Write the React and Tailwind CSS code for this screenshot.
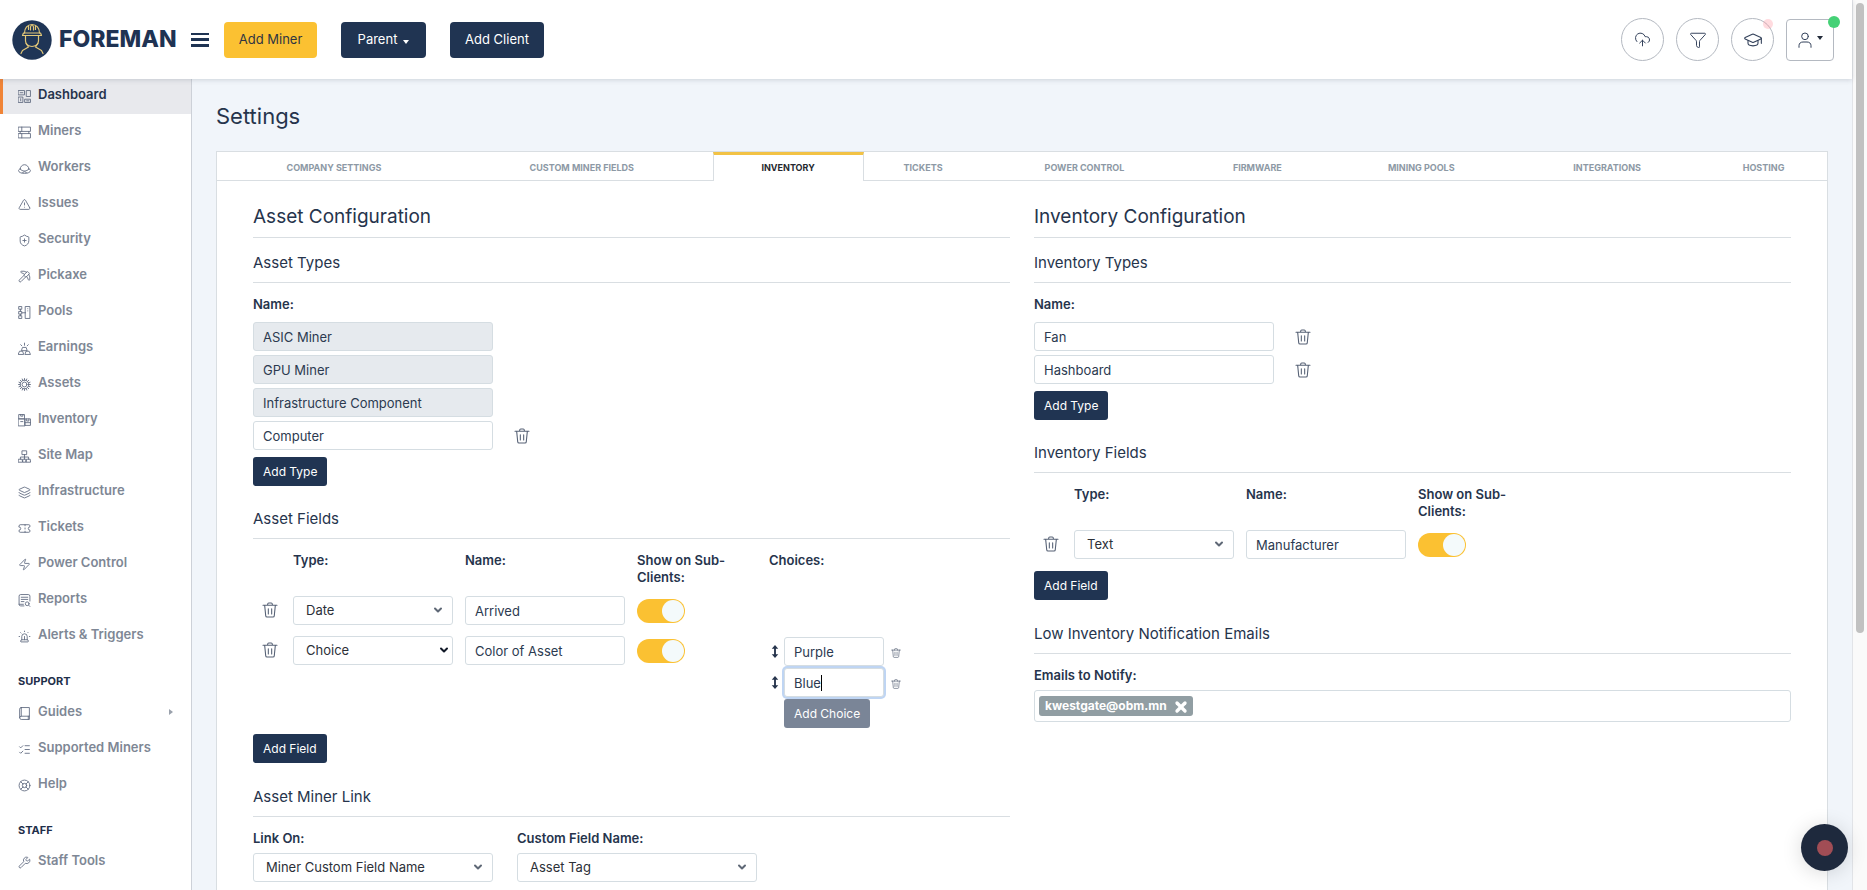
import {
  ChevronDown,
  CloudUpload,
  Funnel,
  GraduationCap,
  Layers,
  LifeBuoy,
  ListChecks,
  Pickaxe,
  ShieldPlus,
  Siren,
  Ticket,
  TriangleAlert,
  Wrench,
  X,
  Zap,
} from 'lucide-react'

function Glyph({ children, className = 'h-[13px] w-[13px]', strokeWidth = 1.6, viewBox = '0 0 24 24' }) {
  return (
    <svg
      viewBox={viewBox}
      className={className}
      fill="none"
      stroke="currentColor"
      strokeWidth={strokeWidth}
      strokeLinecap="round"
      strokeLinejoin="round"
      aria-hidden
    >
      {children}
    </svg>
  )
}

const DashboardIcon = () => (
  <Glyph>
    <path d="M1 1h11v8H1zM1 13h8v10H1zM16 1h7v11h-7zM13 17h10v6H13zM4 5h5M5 16v4M16 20h4" />
  </Glyph>
)

const MinersIcon = () => (
  <Glyph>
    <path d="M1 2h22v8H1zM1 14h22v8H1zM7 2v8M7 14v8M4 10v4M20 10v4" />
  </Glyph>
)

const WorkersIcon = () => (
  <Glyph>
    <path d="M4 13a8 8 0 0 1 16 0M4 12.500c-2 1-3 2-3 3.500 0 3 5 5 11 5s11-2 11-5c0-1.500-1-2.500-3-3.500M4 13c2 2.500 5 3.500 8 3.500s6-1 8-3.500M8 20c1-3 7-3 8 0" />
  </Glyph>
)

const PoolsIcon = () => (
  <Glyph>
    <path d="M14 1h8v22h-8zM18 5v.1M18 9v.1M2 1h5v5H2zM2 10h5v5H2zM2 18h5v5H2zM7 12.500h7M4.500 6v4M4.500 15v3" />
  </Glyph>
)

const EarningsIcon = () => (
  <Glyph>
    <path d="M9 10h6l2 6H7zM3.500 17h5l2 6H1zM15.500 17h5l2.500 6h-9.500zM12 2v4M5 5l2 2M19 5l-2 2" />
  </Glyph>
)

const AssetsIcon = () => (
  <Glyph>
    <circle cx="12" cy="12" r="8" />
    <circle cx="12" cy="12" r="4.500" />
    <path d="M12 1v3M12 20v3M1 12h3M20 12h3M4.200 4.200l2 2M17.800 17.800l2 2M19.800 4.200l-2 2M6.200 17.800l-2 2M7.800 1.800l1 2.700M16.200 1.800l-1 2.700M7.800 22.200l1-2.700M16.200 22.200l-1-2.700M1.800 7.800l2.700 1M1.800 16.200l2.700-1M22.200 7.800l-2.700 1M22.200 16.200l-2.700-1" />
  </Glyph>
)

const InventoryIcon = () => (
  <Glyph>
    <path d="M2 1h10v8H2zM1 9h12v13H1zM13 9h10v12H13zM5 1v3h4V1M5 14h4M16 9v4h4V9M13 16h10" />
  </Glyph>
)

const SiteMapIcon = () => (
  <Glyph>
    <path d="M8 1.500h8v7H8zM1.500 17h6l1 5.500H.8zM16.500 17h6l.7 5.500h-7.700zM12 8.500V17M4.500 17v-4h15v4M9.500 17h5v5.500h-5z" />
  </Glyph>
)

const ReportsIcon = () => (
  <Glyph>
    <path d="M11 22H5a3 3 0 0 1-3-3V4a3 3 0 0 1 3-3h14a3 3 0 0 1 3 3v9M6 6h12M6 10h12M6 14h5M2 19h8" />
    <circle cx="17" cy="18" r="3.500" />
    <path d="m20 21 2 2" />
  </Glyph>
)

const GuidesIcon = () => (
  <Glyph>
    <path d="M6 1h15v16H6a3 3 0 0 0-3 3V4a3 3 0 0 1 3-3zM3 20a3 3 0 0 0 3 3h15v-6M6 1v16M19 17v6" />
  </Glyph>
)

const TrashIcon = ({ className = 'h-4 w-4' }) => (
  <Glyph className={className} strokeWidth={1.6}>
    <path d="M1.500 5h21M8.500 5V3.200C8.500 2.200 9.200 1.500 10.200 1.500h3.600c1 0 1.700.7 1.700 1.700V5M4 5l1.600 15.800c.1 1 .9 1.700 1.900 1.700h9c1 0 1.800-.7 1.900-1.700L20 5M9.500 10v8M14.500 10v8" />
  </Glyph>
)

const UserIcon = () => (
  <Glyph className="h-4 w-4" strokeWidth={1.5}>
    <circle cx="12" cy="6.500" r="5" />
    <path d="M3 23v-2.500c0-3.500 2.500-5.500 6-5.500h6c3.500 0 6 2 6 5.500V23" />
  </Glyph>
)

const DragIcon = () => (
  <svg viewBox="0 0 8 14" className="mr-1 ml-[2px] h-[13px] w-[8px] text-[#26344c]" fill="currentColor" aria-hidden>
    <path d="M4 0l3.500 4H5v6h2.500L4 14 .5 10H3V4H.5z" />
  </svg>
)

function Logo() {
  return (
    <a href="#" className="flex items-center gap-[7px]" aria-label="Foreman">
      <svg viewBox="0 0 40 40" className="h-10 w-10" fill="none" aria-hidden>
        <circle cx="20" cy="20" r="19.700" fill="#1f3556" />
        <g stroke="#e3c878" strokeWidth="1.200" strokeLinecap="round" strokeLinejoin="round">
          <path d="M12.500 13C12.500 8 15.500 4.500 20 4.500s7.500 3.500 7.500 8.500" />
          <path d="M16.500 9.500V6M23.500 9.500V6M18.500 10V7a1.500 1.500 0 0 1 3 0v3" />
          <path d="M11.500 13h17l1 2.500h-19z" />
          <path d="M13.500 16v5c0 3 3 5.500 6.500 5.500s6.500-2.500 6.500-5.500v-5" />
          <path d="M14 23.500l2.500 3.500-6 3.500-1.500 3M26 23.500L23.500 27l6 3.500 1.500 3" />
        </g>
      </svg>
      <span className="text-[23px] leading-none font-extrabold text-[#1f3353]">FOREMAN</span>
    </a>
  )
}

function RoundButton({ label, children }) {
  return (
    <button
      type="button"
      aria-label={label}
      className="relative flex h-[43px] w-[43px] items-center justify-center rounded-full border border-[#b4b9c1] bg-white text-[#33415a]"
    >
      {children}
    </button>
  )
}

function Header() {
  return (
    <header className="relative z-10 flex h-[79px] shrink-0 items-center bg-white pr-[18px] pl-3 shadow-[0_1px_5px_rgba(60,70,90,0.2)]">
      <div className="flex w-[212px] items-center">
        <Logo />
        <button type="button" aria-label="Toggle menu" className="mr-[15px] ml-auto flex w-[18px] flex-col gap-[3px]">
          <span className="h-[2px] bg-[#1f3353]" />
          <span className="h-[3px] bg-[#1f3353]" />
          <span className="h-[3px] bg-[#1f3353]" />
        </button>
      </div>
      <div className="flex gap-6 text-[13px]">
        <button type="button" className="h-9 w-[93px] rounded bg-[#fbc132] text-[#2f3542]">
          Add Miner
        </button>
        <button
          type="button"
          className="flex h-9 w-[85px] items-center justify-center gap-[6px] rounded bg-[#203452] text-white"
        >
          Parent
          <span className="mt-1 border-x-[3px] border-t-4 border-x-transparent border-t-white" />
        </button>
        <button type="button" className="h-9 w-[94px] rounded bg-[#203452] text-white">
          Add Client
        </button>
      </div>

      <div className="ml-auto flex items-center gap-3">
        <RoundButton label="Upload">
          <CloudUpload className="h-[17px] w-[17px]" strokeWidth={1.4} />
        </RoundButton>
        <RoundButton label="Filter">
          <Funnel className="h-[18px] w-[18px]" strokeWidth={1.3} />
        </RoundButton>
        <RoundButton label="Learning">
          <GraduationCap className="h-5 w-5" strokeWidth={1.3} />
          <span className="absolute top-0 right-0 h-[10px] w-[10px] rounded-full bg-[#ff8896]/30" />
        </RoundButton>
        <button
          type="button"
          aria-label="Account"
          className="relative flex h-[42px] w-12 items-center justify-center gap-1 rounded border border-[#b4b9c1] text-[#33415a]"
        >
          <UserIcon />
          <span className="-mt-1 border-x-[3px] border-t-4 border-x-transparent border-t-[#222b3a]" />
          <span className="absolute -top-1 -right-[7px] h-3 w-3 rounded-full bg-[#45d176]" />
        </button>
      </div>
    </header>
  )
}

const MENU = [
  { label: 'Dashboard', icon: DashboardIcon, active: true },
  { label: 'Miners', icon: MinersIcon },
  { label: 'Workers', icon: WorkersIcon },
  { label: 'Issues', icon: TriangleAlert },
  { label: 'Security', icon: ShieldPlus },
  { label: 'Pickaxe', icon: Pickaxe },
  { label: 'Pools', icon: PoolsIcon },
  { label: 'Earnings', icon: EarningsIcon },
  { label: 'Assets', icon: AssetsIcon },
  { label: 'Inventory', icon: InventoryIcon },
  { label: 'Site Map', icon: SiteMapIcon },
  { label: 'Infrastructure', icon: Layers },
  { label: 'Tickets', icon: Ticket },
  { label: 'Power Control', icon: Zap },
  { label: 'Reports', icon: ReportsIcon },
  { label: 'Alerts & Triggers', icon: Siren },
]

const SUPPORT = [
  { label: 'Guides', icon: GuidesIcon, submenu: true },
  { label: 'Supported Miners', icon: ListChecks },
  { label: 'Help', icon: LifeBuoy },
]

const STAFF = [{ label: 'Staff Tools', icon: Wrench }]

function MenuList({ items }) {
  return (
    <ul>
      {items.map(({ label, icon: Icon, active, submenu }) => (
        <li key={label} className="h-9">
          <a
            href="#"
            className={`flex h-[35px] items-center border-l-[3px] pb-[3px] pl-[15px] text-[13px] font-semibold ${
              active ? 'border-[#f08437] bg-[#e8e9ed] text-[#26344c]' : 'border-transparent text-[#7e8795]'
            }`}
          >
            <span className="mt-[2px] mr-[7px] text-[#5f6a7f]">
              <Icon className="h-[13px] w-[13px]" strokeWidth={1.6} />
            </span>
            {label}
            {submenu && (
              <span className="mr-[18px] ml-auto border-y-[3px] border-l-4 border-y-transparent border-l-[#9aa1ac]" />
            )}
          </a>
        </li>
      ))}
    </ul>
  )
}

function MenuHeading({ children }) {
  return <h2 className="flex h-[41px] items-center pt-[11px] pl-[18px] text-[11px] font-bold text-[#1f2f4a]">{children}</h2>
}

function Sidebar() {
  return (
    <nav className="w-[192px] shrink-0 overflow-hidden border-r border-[#cdd1d8] bg-white">
      <MenuList items={MENU} />
      <MenuHeading>SUPPORT</MenuHeading>
      <MenuList items={SUPPORT} />
      <MenuHeading>STAFF</MenuHeading>
      <MenuList items={STAFF} />
    </nav>
  )
}

const TABS = [
  'COMPANY SETTINGS',
  'CUSTOM MINER FIELDS',
  'INVENTORY',
  'TICKETS',
  'POWER CONTROL',
  'FIRMWARE',
  'MINING POOLS',
  'INTEGRATIONS',
  'HOSTING',
]

function Tabs() {
  return (
    <div
      role="tablist"
      className="grid h-[29px] grid-cols-[234fr_262fr_151fr_119fr_204fr_142fr_186fr_186fr_127fr] text-[9px] font-bold"
    >
      {TABS.map((tab) => (
        <button
          key={tab}
          type="button"
          role="tab"
          aria-selected={tab === 'INVENTORY'}
          className={
            tab === 'INVENTORY'
              ? 'border-x border-t-[3px] border-x-[#d9dee2] border-t-[#f2c245] text-[#25282e]'
              : 'border-b border-[#d9dee2] pt-[3px] text-[#8d99a5]'
          }
        >
          {tab}
        </button>
      ))}
    </div>
  )
}

function Title({ children }) {
  return (
    <h2 className="mb-[15px] border-b border-[#d9dee2] pb-2 text-[19px] leading-6 text-[#26344c]">{children}</h2>
  )
}

function Subtitle({ children }) {
  return (
    <h3 className="mb-[13px] border-b border-[#d9dee2] pb-[9px] text-[15px] leading-5 text-[#26344c]">{children}</h3>
  )
}

function DarkButton({ children, className = '' }) {
  return (
    <button type="button" className={`h-[29px] rounded-[3px] bg-[#203452] px-[10px] text-xs text-white ${className}`}>
      {children}
    </button>
  )
}

function TextBox({ label, value, disabled, className = 'w-60' }) {
  return (
    <input
      type="text"
      aria-label={label}
      defaultValue={value}
      disabled={disabled}
      className={`block h-[29px] rounded-[3px] border border-[#d5dde2] bg-white px-[9px] text-[13px] text-[#2c3a50] disabled:bg-[#e6eaee] ${className}`}
    />
  )
}

function SelectBox({ id, label, value, className = 'w-60', arrow = 'right-[9px] stroke-[#5f6876]' }) {
  return (
    <div className={`relative ${className}`}>
      <select
        id={id}
        aria-label={label}
        defaultValue={value}
        className="block h-[29px] w-full appearance-none rounded-[3px] border border-[#d5dde2] bg-white px-3 text-[13px] font-normal text-[#2c3038]"
      >
        <option>{value}</option>
      </select>
      <ChevronDown className={`pointer-events-none absolute top-2 h-3 w-3 ${arrow}`} strokeWidth={4} aria-hidden />
    </div>
  )
}

function Toggle({ label }) {
  return (
    <label className="relative block h-6 w-12 rounded-full bg-[#fbc132]">
      <input type="checkbox" role="switch" defaultChecked aria-label={label} className="peer sr-only" />
      <span className="absolute top-px left-px h-[22px] w-[22px] rounded-full bg-[#f4fafb] peer-checked:left-[25px]" />
    </label>
  )
}

function DeleteButton({ label, className = '', small }) {
  return (
    <button type="button" aria-label={label} className={`text-[#566175] ${className}`}>
      <TrashIcon className={small ? 'h-[10px] w-[10px]' : 'h-4 w-4'} />
    </button>
  )
}

function TypeList({ types }) {
  return (
    <div className="mb-[23px]">
      <p className="mb-[9px] text-[13px] leading-[17px] font-semibold text-[#26344c]">Name:</p>
      <ul className="mb-[7px] flex flex-col gap-1">
        {types.map((type) => (
          <li key={type.name} className="flex items-center">
            <TextBox label="Name" value={type.name} disabled={type.locked} />
            {!type.locked && <DeleteButton label={`Delete ${type.name}`} className="ml-[21px]" />}
          </li>
        ))}
      </ul>
      <DarkButton>Add Type</DarkButton>
    </div>
  )
}

const FIELD_GRID = 'grid grid-cols-[28px_160px_160px_120px_1fr] gap-x-3'

function FieldHeadings({ choices }) {
  return (
    <div className={`${FIELD_GRID} mb-[10px] text-[13px] leading-[17px] font-semibold text-[#26344c]`}>
      <span />
      <span>Type:</span>
      <span>Name:</span>
      <span className="w-[90px]">Show on Sub-Clients:</span>
      {choices && <span>Choices:</span>}
    </div>
  )
}

function FieldRow({ type, name, children, arrow }) {
  return (
    <div className={`${FIELD_GRID} items-start`}>
      <DeleteButton label={`Delete ${name}`} className="mt-[6px] ml-[9px]" />
      <SelectBox label="Type" value={type} className="w-40" arrow={arrow} />
      <TextBox label="Name" value={name} className="w-40" />
      <div className="pt-[3px]">
        <Toggle label={`Show ${name} on Sub-Clients`} />
      </div>
      {children}
    </div>
  )
}

function Choice({ value, focused }) {
  return (
    <li className="flex items-center">
      <DragIcon />
      <div className="relative ml-px">
        <TextBox
          label="Choice"
          value={value}
          className={focused ? 'w-[100px] border-[#b3cdf0] ring-2 ring-[#bfd5f3]' : 'w-[100px]'}
        />
        {focused && <span className="absolute top-[7px] left-[37px] h-4 w-px bg-black" />}
      </div>
      <DeleteButton label={`Delete ${value}`} className="mt-[3px] ml-[7px]" small />
    </li>
  )
}

function AssetColumn() {
  return (
    <section>
      <Title>Asset Configuration</Title>
      <Subtitle>Asset Types</Subtitle>
      <TypeList
        types={[
          { name: 'ASIC Miner', locked: true },
          { name: 'GPU Miner', locked: true },
          { name: 'Infrastructure Component', locked: true },
          { name: 'Computer' },
        ]}
      />

      <Subtitle>Asset Fields</Subtitle>
      <FieldHeadings choices />
      <FieldRow type="Date" name="Arrived" />
      <div className="mt-[11px] mb-[6px]">
        <FieldRow type="Choice" name="Color of Asset" arrow="right-[3px] stroke-[#111827]">
          <div className="pt-px">
            <ul className="flex flex-col gap-[2px]">
              <Choice value="Purple" />
              <Choice value="Blue" focused />
            </ul>
            <button
              type="button"
              disabled
              className="mt-[2px] ml-[15px] h-[29px] rounded-[3px] bg-[#7a8597] px-[10px] text-xs text-white"
            >
              Add Choice
            </button>
          </div>
        </FieldRow>
      </div>
      <DarkButton className="mb-6">Add Field</DarkButton>

      <Subtitle>Asset Miner Link</Subtitle>
      <div className="flex gap-6 text-[13px] leading-[17px] font-semibold text-[#26344c]">
        <div>
          <label htmlFor="link-on" className="mb-[6px] block">
            Link On:
          </label>
          <SelectBox id="link-on" value="Miner Custom Field Name" />
        </div>
        <div>
          <label htmlFor="custom-field" className="mb-[6px] block">
            Custom Field Name:
          </label>
          <SelectBox id="custom-field" value="Asset Tag" />
        </div>
      </div>
    </section>
  )
}

function InventoryColumn() {
  return (
    <section>
      <Title>Inventory Configuration</Title>
      <Subtitle>Inventory Types</Subtitle>
      <TypeList types={[{ name: 'Fan' }, { name: 'Hashboard' }]} />

      <Subtitle>Inventory Fields</Subtitle>
      <FieldHeadings />
      <FieldRow type="Text" name="Manufacturer" />
      <DarkButton className="mt-3 mb-6">Add Field</DarkButton>

      <Subtitle>Low Inventory Notification Emails</Subtitle>
      <label htmlFor="emails" className="mb-[6px] block text-[13px] leading-[17px] font-semibold text-[#26344c]">
        Emails to Notify:
      </label>
      <div className="flex h-8 items-center rounded-[3px] border border-[#d5dde2] px-1">
        <span className="flex h-5 items-center rounded-[3px] bg-[#919ea3] px-[6px] text-xs font-bold text-white">
          kwestgate@obm.mn
          <button type="button" aria-label="Remove kwestgate@obm.mn" className="mt-[2px] -mr-[2px] ml-[6px]">
            <X className="h-4 w-4" strokeWidth={5} />
          </button>
        </span>
        <input id="emails" type="email" className="ml-2 min-w-0 flex-1 bg-transparent text-[13px] outline-none" />
      </div>
    </section>
  )
}

export default function App() {
  return (
    <div className="flex h-screen overflow-hidden bg-[#f1f5fa] font-[Inter,'Open_Sans',sans-serif]">
      <div className="flex min-w-0 flex-1 flex-col">
        <Header />
        <div className="flex min-h-0 flex-1">
          <Sidebar />
          <main className="flex min-w-0 flex-1 flex-col overflow-hidden pr-6 pl-6">
            <h1 className="pt-[23px] pb-[21px] text-[22px] leading-7 text-[#26344c]">Settings</h1>
            <div className="flex-1 border border-b-0 border-[#d9dee2] bg-white">
              <Tabs />
              <div className="grid grid-cols-2 gap-6 px-9 pt-6">
                <AssetColumn />
                <InventoryColumn />
              </div>
            </div>
          </main>
        </div>
      </div>
      <div className="w-[15px] shrink-0 border-l border-[#e2e4e8] bg-[#fafafa] px-[3px] pt-[3px]" aria-hidden>
        <div className="h-[71%] rounded-full bg-[#c1c1c1]" />
      </div>
      <button
        type="button"
        aria-label="Record"
        className="fixed right-[19px] bottom-[19px] z-20 flex h-[47px] w-[47px] items-center justify-center rounded-full bg-[#1e293d] shadow-[0_2px_20px_rgba(0,0,0,0.15)]"
      >
        <span className="h-4 w-4 rounded-full bg-[#a14d55]" />
      </button>
    </div>
  )
}
